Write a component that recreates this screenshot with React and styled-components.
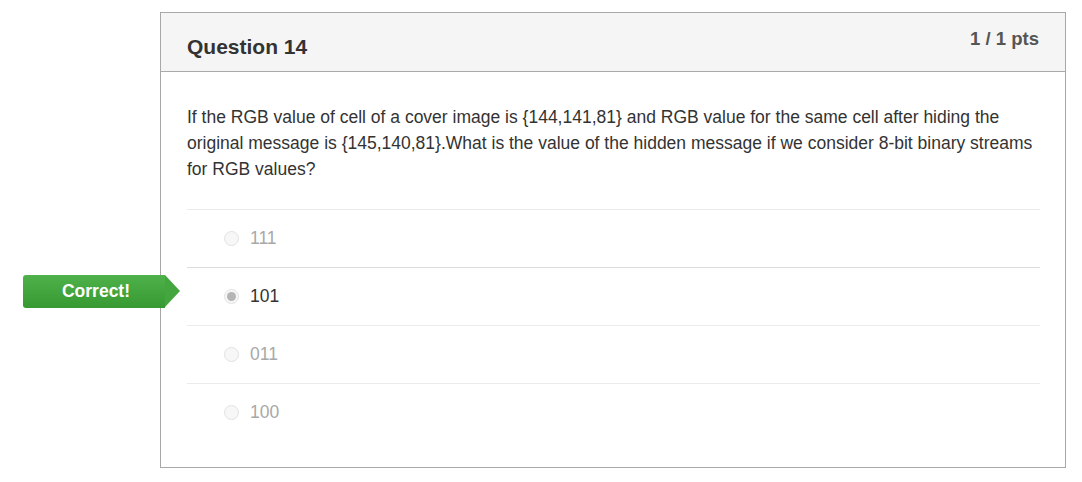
import React from "react";
import styled, { createGlobalStyle } from "styled-components";

const Global = createGlobalStyle`
  html, body { margin: 0; padding: 0; background: #fff; }
  body { font-family: "Liberation Sans", Arial, sans-serif; }
`;

const Page = styled.div`
  padding: 12px 0 0 160px;
`;

const Card = styled.div`
  width: 904px;
  height: 454px;
  border: 1px solid #a8a8a8;
  box-sizing: content-box;
  display: flex;
  flex-direction: column;
`;

const Header = styled.div`
  height: 58px;
  background: #f5f5f5;
  border-bottom: 1px solid #aaaaaa;
  display: flex;
  justify-content: space-between;
  align-items: flex-start;
  padding: 0 26px;
`;

const Title = styled.h2`
  margin: 0;
  padding-top: 22px;
  font-size: 21px;
  line-height: 24px;
  font-weight: bold;
  color: #333;
`;

const Points = styled.div`
  padding-top: 15px;
  font-size: 18.5px;
  line-height: 22px;
  font-weight: bold;
  color: #555;
`;

const Body = styled.div`
  padding: 32px 25px 0 26px;
`;

const QuestionText = styled.p`
  margin: 0 -3px 27px 0;
  font-size: 17.5px;
  line-height: 26px;
  color: #333;
`;

const AnswerList = styled.div`
  display: flex;
  flex-direction: column;
`;

const AnswerRow = styled.div`
  position: relative;
  height: 57px;
  border-top: 1px solid ${(p) => (p.$strong ? "#dcdcdc" : "#ebebeb")};
  display: flex;
  align-items: center;
  padding-left: 37px;
  gap: 11px;
`;

const Radio = styled.span`
  width: 15px;
  height: 15px;
  margin-top: -1px;
  border-radius: 50%;
  border: 1px solid #e2e2e2;
  background: #f7f7f7;
  display: flex;
  align-items: center;
  justify-content: center;
  box-sizing: border-box;
  &::after {
    content: "";
    display: ${(p) => (p.$checked ? "block" : "none")};
    width: 9px;
    height: 9px;
    border-radius: 50%;
    background: #b5b5b5;
  }
`;

const AnswerText = styled.span`
  font-size: 17.5px;
  line-height: 20px;
  margin-top: -1px;
  color: ${(p) => (p.$chosen ? "#333" : "#a8a8a8")};
`;

const Badge = styled.div`
  position: absolute;
  left: -164px;
  top: 7px;
  width: 142px;
  height: 33px;
  background: linear-gradient(#4fb14a, #379932);
  border-radius: 3px 0 0 3px;
  color: #fff;
  font-weight: bold;
  font-size: 17.5px;
  display: flex;
  align-items: center;
  justify-content: center;
  padding-left: 4px;
  box-sizing: border-box;
  &::after {
    content: "";
    position: absolute;
    right: -15px;
    top: 0;
    width: 0;
    height: 0;
    border-top: 16.5px solid transparent;
    border-bottom: 16.5px solid transparent;
    border-left: 15px solid #44a63f;
  }
`;

const question =
  "If the RGB value of cell of a cover image is {144,141,81} and RGB value for the same cell after hiding the original message is {145,140,81}.What is the value of the hidden message if we consider 8-bit binary streams for RGB values?";

const answers = [
  { text: "111" },
  { text: "101", chosen: true },
  { text: "011" },
  { text: "100" },
];

export default function App() {
  return (
    <>
      <Global />
      <Page>
        <Card>
          <Header>
            <Title>Question 14</Title>
            <Points>1 / 1 pts</Points>
          </Header>
          <Body>
            <QuestionText>{question}</QuestionText>
            <AnswerList>
              {answers.map((a, i) => (
                <AnswerRow key={a.text} $strong={i === 1}>
                  {a.chosen && <Badge>Correct!</Badge>}
                  <Radio $checked={a.chosen} />
                  <AnswerText $chosen={a.chosen}>{a.text}</AnswerText>
                </AnswerRow>
              ))}
            </AnswerList>
          </Body>
        </Card>
      </Page>
    </>
  );
}
